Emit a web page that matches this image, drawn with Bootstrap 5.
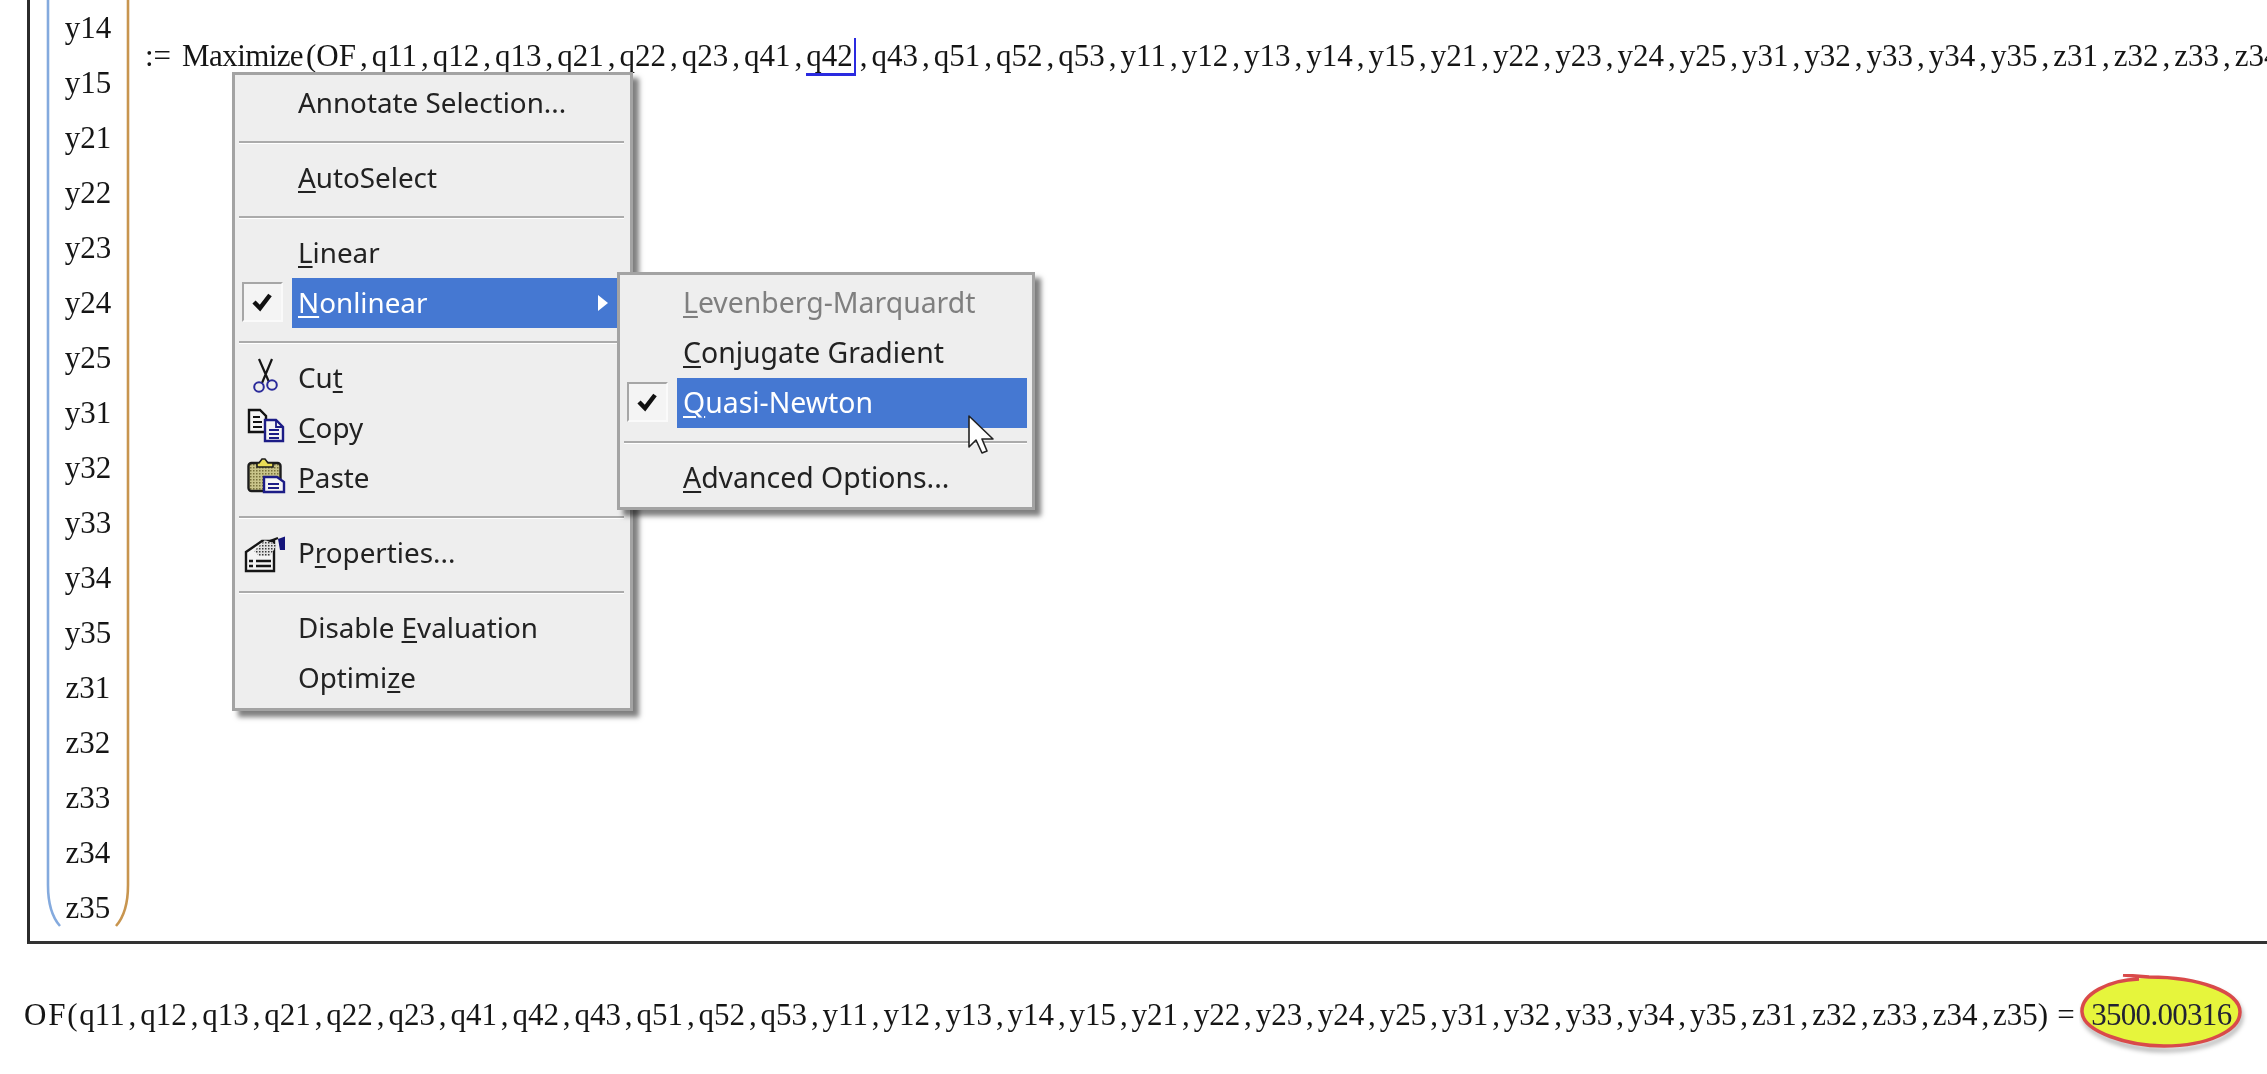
<!DOCTYPE html>
<html lang="en">
<head>
<meta charset="utf-8">
<title>Maximize</title>
<link rel="stylesheet" href="https://cdn.jsdelivr.net/npm/bootstrap@5.3.0/dist/css/bootstrap.min.css">
<style>
html,body{height:1074px;overflow:hidden;background:#fff}
body{font-family:"Liberation Serif",serif;font-size:31px;color:#151515;position:relative;filter:blur(.55px)}
.sheet{margin-left:27px;height:944px;border-left:3px solid #2b2b2b;border-bottom:3px solid #333;padding-left:16px;overflow:hidden}
.matrix-rows{width:52px}
.matrix-row{height:55px;line-height:55px;text-align:center;white-space:nowrap}
.paren{flex:none;display:block}
.formula{margin:36px 0 0 14px;line-height:40px;white-space:nowrap}
.cm{margin:0 4px}
.fn{letter-spacing:-.6px;margin:0 3px 0 11px}
.sel{border-bottom:3px solid #2a2ae0;border-right:2px solid #2a2ae0;padding-right:1px}
.result{margin-top:30px;padding-left:24px;height:75px;white-space:nowrap}
.result .cm{margin:0 3.9px}
.result-expr{padding-top:7px}
.lead-in{letter-spacing:1.8px}
.eq{margin:0 0 0 9px;display:inline-block;width:22px}
.ring{position:relative;width:163px;height:75px;padding-left:12px;flex:none}
.ring svg{position:absolute;left:0;top:0}
.ring span{position:relative;letter-spacing:-.7px;color:#223;padding-top:7px}
.win-menu{display:block;position:absolute;margin:0;padding:3px 6px 8px 7px;border:3px solid #a3a3a3;border-radius:0;background:#eee;min-width:0;box-shadow:6px 6px 5px rgba(0,0,0,.5);font-family:"Noto Sans",sans-serif;font-size:27.8px;color:#222}
.menu-main{left:232px;top:72px;width:401px;height:639px;z-index:2}
.menu-sub{left:617px;top:272px;width:418px;height:238px;z-index:3;padding-right:5px;font-size:28.4px}
.win-item{height:50px;padding:0;display:flex;align-items:center;white-space:nowrap;color:#222}
.win-item:hover,.win-item:focus{background:none;color:#222}
.win-slot{width:50px;height:50px;flex:none;position:relative}
.win-slot svg{position:absolute}
.win-label{flex:1;height:50px;line-height:48px;padding-left:6px;align-self:stretch;position:relative}
.win-item.on .win-label{background:#4578d2;color:#fff}
.win-item.off{color:#7f7f7f}
.win-sep{height:25px;margin:0 0 0 -3px;padding-top:13px;border:0;opacity:1;background:none}
.win-sep::before{content:"";display:block;height:3px;background:#ababab;border-bottom:1px solid #fff}
.win-menu u{text-decoration-thickness:2px;text-underline-offset:3px}
.checkbox{position:absolute;left:0;top:4px;width:41px;height:40px;border:2px solid;border-color:#a6a6a6 #fafafa #fafafa #a6a6a6;background:#f4f4f4}
.chev{position:absolute;right:16px;top:17px;width:0;height:0;border-left:10px solid #fff;border-top:8px solid transparent;border-bottom:8px solid transparent}
.pointer{position:absolute;left:968px;top:415px;z-index:4}
</style>
</head>
<body>
<div class="sheet d-flex align-items-start">
  <svg class="paren" width="16" height="940" viewBox="0 0 16 940"><path d="M2 0V885C2 902 6 917 14 926" fill="none" stroke="#84aade" stroke-width="2.6"/></svg>
  <div class="matrix-rows flex-shrink-0">
    <div class="matrix-row">y14</div><div class="matrix-row">y15</div><div class="matrix-row">y21</div><div class="matrix-row">y22</div><div class="matrix-row">y23</div><div class="matrix-row">y24</div><div class="matrix-row">y25</div><div class="matrix-row">y31</div><div class="matrix-row">y32</div><div class="matrix-row">y33</div><div class="matrix-row">y34</div><div class="matrix-row">y35</div><div class="matrix-row">z31</div><div class="matrix-row">z32</div><div class="matrix-row">z33</div><div class="matrix-row">z34</div><div class="matrix-row">z35</div>
  </div>
  <svg class="paren" width="17" height="940" viewBox="0 0 17 940"><path d="M14 0V885C14 902 10 917 2 926" fill="none" stroke="#c8954f" stroke-width="2.6"/></svg>
  <div class="formula">:=<span class="fn">Maximize</span>(OF<span class="cm">,</span>q11<span class="cm">,</span>q12<span class="cm">,</span>q13<span class="cm">,</span>q21<span class="cm">,</span>q22<span class="cm">,</span>q23<span class="cm">,</span>q41<span class="cm">,</span><span class="sel">q42</span><span class="cm">,</span>q43<span class="cm">,</span>q51<span class="cm">,</span>q52<span class="cm">,</span>q53<span class="cm">,</span>y11<span class="cm">,</span>y12<span class="cm">,</span>y13<span class="cm">,</span>y14<span class="cm">,</span>y15<span class="cm">,</span>y21<span class="cm">,</span>y22<span class="cm">,</span>y23<span class="cm">,</span>y24<span class="cm">,</span>y25<span class="cm">,</span>y31<span class="cm">,</span>y32<span class="cm">,</span>y33<span class="cm">,</span>y34<span class="cm">,</span>y35<span class="cm">,</span>z31<span class="cm">,</span>z32<span class="cm">,</span>z33<span class="cm">,</span>z34</div>
</div>

<div class="result d-flex align-items-center">
  <div class="result-expr"><span class="lead-in">OF(</span>q11<span class="cm">,</span>q12<span class="cm">,</span>q13<span class="cm">,</span>q21<span class="cm">,</span>q22<span class="cm">,</span>q23<span class="cm">,</span>q41<span class="cm">,</span>q42<span class="cm">,</span>q43<span class="cm">,</span>q51<span class="cm">,</span>q52<span class="cm">,</span>q53<span class="cm">,</span>y11<span class="cm">,</span>y12<span class="cm">,</span>y13<span class="cm">,</span>y14<span class="cm">,</span>y15<span class="cm">,</span>y21<span class="cm">,</span>y22<span class="cm">,</span>y23<span class="cm">,</span>y24<span class="cm">,</span>y25<span class="cm">,</span>y31<span class="cm">,</span>y32<span class="cm">,</span>y33<span class="cm">,</span>y34<span class="cm">,</span>y35<span class="cm">,</span>z31<span class="cm">,</span>z32<span class="cm">,</span>z33<span class="cm">,</span>z34<span class="cm">,</span>z35)<span class="eq">=</span></div>
  <div class="ring d-flex align-items-center">
    <svg width="170" height="84" viewBox="0 0 170 84">
      <defs><filter id="soft" x="-20%" y="-20%" width="140%" height="140%"><feGaussianBlur stdDeviation="2.5"/></filter></defs>
      <path d="M4 38C4 58 50 72 85 72C130 72 161 56 161 38C161 18 120 4 70 4C30 5 3 20 4 38Z" fill="none" stroke="#000" stroke-opacity=".45" stroke-width="3" transform="translate(1 4)" filter="url(#soft)"/>
      <path d="M4 38C4 58 50 72 85 72C130 72 161 56 161 38C161 18 120 4 70 4C30 5 3 20 4 38Z" fill="#e6f53c"/>
      <path d="M60 5C30 6 2 20 3 38C4 58 50 72 85 72C130 72 161 56 161 38C161 18 120 3 70 3L44 1" fill="none" stroke="#d94a4a" stroke-width="3.5"/>
    </svg>
    <span>3500.00316</span>
  </div>
</div>

<div class="dropdown-menu win-menu menu-main">
  <div class="dropdown-item win-item"><div class="win-slot"></div><div class="win-label">Annotate Selection...</div></div>
  <hr class="win-sep">
  <div class="dropdown-item win-item"><div class="win-slot"></div><div class="win-label"><u>A</u>utoSelect</div></div>
  <hr class="win-sep">
  <div class="dropdown-item win-item"><div class="win-slot"></div><div class="win-label"><u>L</u>inear</div></div>
  <div class="dropdown-item win-item on"><div class="win-slot"><div class="checkbox"></div><svg style="left:10px;top:14px" width="22" height="20" viewBox="0 0 22 20"><path d="M2 10L8 16L18 3" fill="none" stroke="#111" stroke-width="4.5"/></svg></div><div class="win-label"><u>N</u>onlinear<span class="chev"></span></div></div>
  <hr class="win-sep">
  <div class="dropdown-item win-item"><div class="win-slot"><svg style="left:11px;top:5px" width="25" height="36" viewBox="0 0 25 36"><path d="M6 1L16 24M19 1L9 25" fill="none" stroke="#151515" stroke-width="2.2"/><circle cx="6" cy="29" r="4.8" fill="none" stroke="#2a2a9a" stroke-width="2"/><circle cx="19" cy="27" r="4.8" fill="none" stroke="#2a2a9a" stroke-width="2"/></svg></div><div class="win-label">Cu<u>t</u></div></div>
  <div class="dropdown-item win-item"><div class="win-slot"><svg style="left:5px;top:5px" width="38" height="35" viewBox="0 0 38 35"><path d="M2 2H13L19 8V24H2Z" fill="#f4f4f4" stroke="#111" stroke-width="2.4"/><path d="M6 9H13M6 14H15M6 19H15" stroke="#111" stroke-width="2"/><path d="M18 12H29L36 19V33H18Z" fill="#f4f4f4" stroke="#1c1c86" stroke-width="2.4"/><path d="M29 12V19H36M22 22H32M22 26H32M22 30H32" fill="none" stroke="#1c1c86" stroke-width="1.8"/></svg></div><div class="win-label"><u>C</u>opy</div></div>
  <div class="dropdown-item win-item"><div class="win-slot"><svg style="left:5px;top:5px" width="39" height="36" viewBox="0 0 39 36"><defs><pattern id="dots" width="3" height="3" patternUnits="userSpaceOnUse"><rect width="3" height="3" fill="#c9c48a"/><rect width="1.5" height="1.5" fill="#77713b"/></pattern></defs><rect x="1.5" y="5" width="32" height="28" rx="3" fill="url(#dots)" stroke="#1c1c1c" stroke-width="2.4"/><path d="M10 9H26V5H21L18 1H15L12 5H10Z" fill="#e9dc56" stroke="#1c1c1c" stroke-width="1.6"/><path d="M17 19H30L37 24V34H17Z" fill="#f4f4f4" stroke="#1c1c86" stroke-width="2.4"/><path d="M21 26H32M21 30H32" stroke="#1c1c86" stroke-width="1.8"/></svg></div><div class="win-label"><u>P</u>aste</div></div>
  <hr class="win-sep">
  <div class="dropdown-item win-item"><div class="win-slot"><svg style="left:2px;top:8px" width="42" height="37" viewBox="0 0 42 37"><defs><pattern id="dots2" width="3" height="3" patternUnits="userSpaceOnUse"><rect width="3" height="3" fill="#e2e2e2"/><rect width="1.5" height="1.5" fill="#3a3a3a"/></pattern></defs><path d="M2 16L18 5H30V35H2Z" fill="#f4f4f4" stroke="#151515" stroke-width="2.4"/><path d="M10 15L21 4L33 9L26 20H15Z" fill="url(#dots2)"/><path d="M26 5L34 2" stroke="#151515" stroke-width="2.4"/><path d="M5 25H9M12 25H27M5 30H9M12 30H27" stroke="#151515" stroke-width="2.4"/><path d="M34 3L41 0.5V14L36 14Z" fill="#14147a"/></svg></div><div class="win-label">P<u>r</u>operties...</div></div>
  <hr class="win-sep">
  <div class="dropdown-item win-item"><div class="win-slot"></div><div class="win-label">Disable <u>E</u>valuation</div></div>
  <div class="dropdown-item win-item"><div class="win-slot"></div><div class="win-label">Optimi<u>z</u>e</div></div>
</div>

<div class="dropdown-menu win-menu menu-sub">
  <div class="dropdown-item win-item off"><div class="win-slot"></div><div class="win-label"><u>L</u>evenberg-Marquardt</div></div>
  <div class="dropdown-item win-item"><div class="win-slot"></div><div class="win-label"><u>C</u>onjugate Gradient</div></div>
  <div class="dropdown-item win-item on"><div class="win-slot"><div class="checkbox"></div><svg style="left:10px;top:14px" width="22" height="20" viewBox="0 0 22 20"><path d="M2 10L8 16L18 3" fill="none" stroke="#111" stroke-width="4.5"/></svg></div><div class="win-label"><u>Q</u>uasi-Newton</div></div>
  <hr class="win-sep">
  <div class="dropdown-item win-item"><div class="win-slot"></div><div class="win-label"><u>A</u>dvanced Options...</div></div>
</div>

<svg class="pointer" width="27" height="40" viewBox="0 0 27 40"><path d="M1 1V32L8 25L14 38L19 36L14 24H25Z" fill="#fff" stroke="#222" stroke-width="1.6" stroke-linejoin="round"/></svg>

<script src="https://cdn.jsdelivr.net/npm/bootstrap@5.3.0/dist/js/bootstrap.bundle.min.js"></script>
</body>
</html>
